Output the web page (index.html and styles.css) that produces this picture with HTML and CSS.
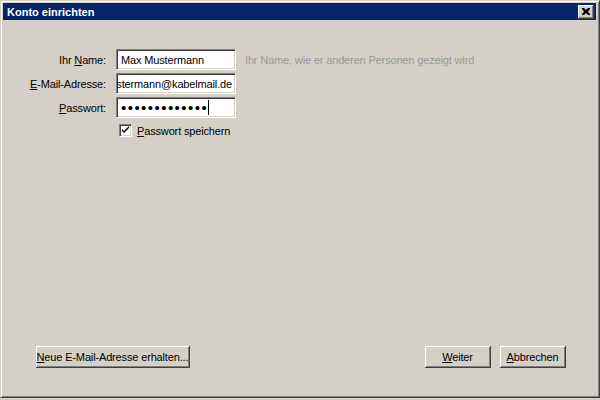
FILE: index.html
```html
<!DOCTYPE html>
<html lang="de">
<head>
  <meta charset="UTF-8" />
  <title>Konto einrichten</title>
  <link rel="stylesheet" href="styles.css">
</head>
<body>

  <div class="window">
    <!-- title bar -->
    <div class="titlebar">
      <span class="title">Konto einrichten</span>
      <span class="close-btn">
        <svg width="8" height="7" viewBox="0 0 8 7">
          <path d="M0 0h2l2 2 2-2h2v1l-2 2.5 2 2.5v1h-2l-2-2-2 2h-2v-1l2-2.5-2-2.5z" fill="#000"/>
        </svg>
      </span>
    </div>

    <div class="content">
      <!-- account form -->
      <div class="form">
        <label class="label"><span>Ihr <u>N</u>ame:</span></label>
        <div class="field"><span>Max Mustermann</span></div>
        <div class="hint">Ihr Name, wie er anderen Personen gezeigt wird</div>

        <label class="label"><span><u>E</u>-Mail-Adresse:</span></label>
        <div class="field scrolled"><span>max.mustermann@kabelmail.de</span></div>
        <div></div>

        <label class="label"><span><u>P</u>asswort:</span></label>
        <div class="field password"><span class="dots">•••••••••••••</span><span class="caret"></span></div>
        <div></div>

        <div></div>
        <div class="check-row">
          <span class="checkbox">
            <svg width="9" height="9" viewBox="0 0 9 9">
              <path d="M1 3v2l2 2 5-5v-2l-5 5z" fill="#000"/>
            </svg>
          </span>
          <span><u>P</u>asswort speichern</span>
        </div>
      </div>

      <!-- buttons -->
      <div class="footer">
        <button class="btn wide"><u>N</u>eue E-Mail-Adresse erhalten...</button>
        <div class="right-btns">
          <button class="btn"><u>W</u>eiter</button>
          <button class="btn"><u>A</u>bbrechen</button>
        </div>
      </div>
    </div>
  </div>

</body>
</html>
```

FILE: styles.css
```css
* {
  margin: 0;
  padding: 0;
  box-sizing: border-box;
}

body {
  background: #d4d0c8;
  width: 600px;
  height: 400px;
  overflow: hidden;
  font-family: 'Liberation Sans', Arial, sans-serif;
  font-size: 11px;
  letter-spacing: -0.15px;
  color: #000;
}

.window {
  width: 600px;
  height: 398px;
  display: flex;
  flex-direction: column;
  background: #d4d0c8;
  border-top: 1px solid #d4d0c8;
  border-left: 1px solid #d4d0c8;
  border-right: 1px solid #404040;
  border-bottom: 1px solid #404040;
  box-shadow: inset 1px 1px 0 #fff, inset -1px -1px 0 #808080;
  padding: 2px 3px 2px 2px;
}

.titlebar {
  height: 17px;
  background: #0a246a;
  display: flex;
  align-items: center;
  justify-content: space-between;
  padding: 0 2px 0 4px;
}

.title {
  color: #fff;
  font-weight: bold;
  font-size: 11px;
  letter-spacing: 0;
}

.close-btn {
  width: 16px;
  height: 14px;
  background: #d4d0c8;
  border-right: 1px solid #404040;
  border-bottom: 1px solid #404040;
  box-shadow: inset 1px 1px 0 #fff, inset -1px -1px 0 #808080;
  display: flex;
  align-items: center;
  justify-content: center;
}

.content {
  flex: 1;
  display: flex;
  flex-direction: column;
  padding: 29px 0 27px 1px;
}

.form {
  display: grid;
  grid-template-columns: 102px 120px auto;
  column-gap: 10px;
  row-gap: 3px;
  align-items: center;
}

.label {
  text-align: right;
}

.field {
  height: 21px;
  background: #fff;
  border-top: 1px solid #808080;
  border-left: 1px solid #808080;
  border-right: 1px solid #fff;
  border-bottom: 1px solid #fff;
  box-shadow: inset 1px 1px 0 #404040, inset -1px -1px 0 #d4d0c8;
  padding: 0 3px 0 4px;
  display: flex;
  align-items: center;
  white-space: nowrap;
  overflow: hidden;
}

.field.scrolled {
  justify-content: flex-end;
  padding-right: 3px;
}

.dots {
  font-size: 15px;
  letter-spacing: 1.45px;
  line-height: 1;
}

.caret {
  display: inline-block;
  width: 1px;
  height: 15px;
  background: #000;
}

.hint {
  color: #999;
  margin-left: -1px;
}

.check-row {
  grid-column: 2 / 4;
  display: flex;
  align-items: center;
  gap: 5px;
  margin-top: 3px;
  padding-left: 3px;
}

.checkbox {
  width: 13px;
  height: 13px;
  background: #fff;
  border-top: 1px solid #808080;
  border-left: 1px solid #808080;
  border-right: 1px solid #fff;
  border-bottom: 1px solid #fff;
  box-shadow: inset 1px 1px 0 #404040, inset -1px -1px 0 #d4d0c8;
  display: flex;
  align-items: center;
  justify-content: center;
}

.footer {
  margin-top: auto;
  display: flex;
  justify-content: space-between;
  align-items: center;
  padding: 0 30px 0 32px;
}

.right-btns {
  display: flex;
  gap: 9px;
}

.btn {
  height: 22px;
  width: 66px;
  font-family: inherit;
  font-size: 11px;
  letter-spacing: -0.15px;
  white-space: nowrap;
  color: #000;
  background: #d4d0c8;
  border: none;
  border-right: 1px solid #404040;
  border-bottom: 1px solid #404040;
  box-shadow: inset 1px 1px 0 #fff, inset -1px -1px 0 #808080;
}

.btn.wide {
  width: 154px;
}
```
